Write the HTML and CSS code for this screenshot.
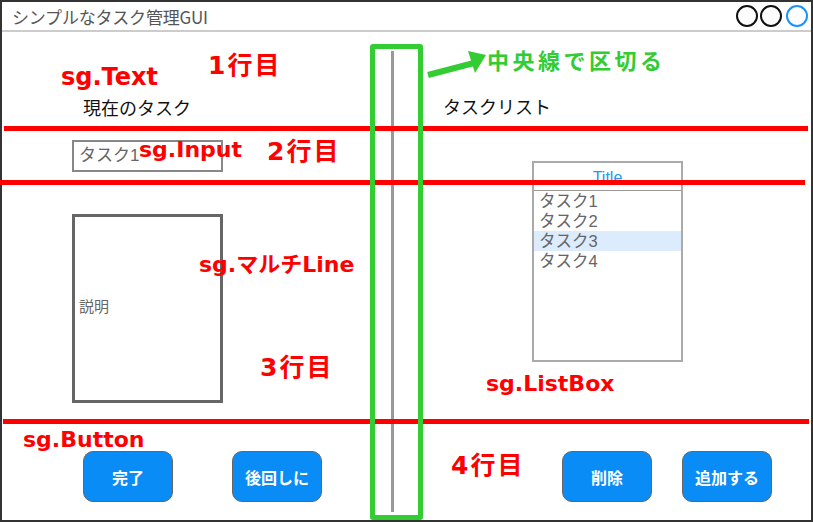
FILE: index.html
```html
<!DOCTYPE html>
<html lang="ja">
<head>
<meta charset="utf-8">
<title>シンプルなタスク管理GUI</title>
<link rel="stylesheet" href="styles.css">
</head>
<body>
<div class="window">
  <div class="titlebar">
    <span class="title">シンプルなタスク管理GUI</span>
    <div class="controls"><span class="dot"></span><span class="dot"></span><span class="dot blue"></span></div>
  </div>
  <div class="body">
    <div class="cell l1"><span class="label">現在のタスク</span></div>
    <div class="sep"></div>
    <div class="cell r1"><span class="label">タスクリスト</span></div>
    <div class="cell l2"><div class="input">タスク1</div></div>
    <div class="cell r23">
      <div class="listbox">
        <div class="lb-head">Title</div>
        <div class="lb-item">タスク1</div>
        <div class="lb-item">タスク2</div>
        <div class="lb-item selected">タスク3</div>
        <div class="lb-item">タスク4</div>
      </div>
    </div>
    <div class="cell l3"><div class="multiline">説明</div></div>
    <div class="cell l4 buttons"><button class="btn">完了</button><button class="btn">後回しに</button></div>
    <div class="cell r4 buttons"><button class="btn">削除</button><button class="btn">追加する</button></div>
  </div>
  <div class="annotations">
    <div class="rline rl1"></div>
    <div class="rline rl2"></div>
    <div class="rline rl3"></div>
    <div class="gbox"></div>
    <svg class="arrow" width="80" height="40" viewBox="0 0 80 40">
      <line x1="8" y1="30" x2="54" y2="18" stroke="#33cc33" stroke-width="6"/>
      <polygon points="48,6 55,28 66,10" fill="#33cc33"/>
    </svg>
    <div class="gtext">中央線で区切る</div>
    <div class="note n-text">sg.Text</div>
    <div class="note n-row1 big">1行目</div>
    <div class="note n-input">sg.Input</div>
    <div class="note n-row2 big">2行目</div>
    <div class="note n-multi">sg.マルチLine</div>
    <div class="note n-row3 big">3行目</div>
    <div class="note n-list">sg.ListBox</div>
    <div class="note n-button">sg.Button</div>
    <div class="note n-row4 big">4行目</div>
  </div>
</div>
</body>
</html>
```
FILE: styles.css
```css
html, body { margin: 0; padding: 0; background: #fff; }
body { width: 813px; height: 522px; overflow: hidden; font-family: "Liberation Sans", "Noto Sans CJK JP", sans-serif; }

.window {
  position: relative;
  width: 813px; height: 522px;
  box-sizing: border-box;
  border: 2px solid #333;
  display: flex; flex-direction: column;
}

.titlebar {
  height: 28px;
  border-bottom: 2px solid #ccc;
  display: flex; align-items: center;
  padding-left: 10px; padding-right: 3px;
}
.title { font-family: "Noto Sans CJK JP", sans-serif; font-size: 17px; color: #555; letter-spacing: -0.2px; }
.controls { margin-left: auto; display: flex; gap: 2px; }
.dot { width: 18px; height: 18px; border: 2px solid #111; border-radius: 50%; }
.dot.blue { border-color: #1e90ff; margin-left: 2px; }

.body {
  flex: 1;
  display: grid;
  grid-template-columns: 368px 53px 1fr;
  grid-template-rows: 94px 55px 239px 1fr;
}
.cell { min-width: 0; }
.label { font-family: "Noto Sans CJK JP", sans-serif; font-size: 18px; line-height: 1.2; color: #111; }
.l1 { grid-column: 1; grid-row: 1; padding: 65px 0 0 81px; }
.r1 { grid-column: 3; grid-row: 1; padding: 64px 0 0 20px; }
.sep { grid-column: 2; grid-row: 1 / 5; margin: 19px 0 8px 21px; width: 3px; background: #999; }

.l2 { grid-column: 1; grid-row: 2; padding: 14px 0 0 70px; }
.input {
  width: 151px; height: 32px; box-sizing: border-box;
  border: 2px solid #888;
  padding-left: 5px;
  font-size: 17px; line-height: 27px; color: #666;
}

.r23 { grid-column: 3; grid-row: 2 / 4; padding: 35px 0 0 109px; }
.listbox {
  width: 151px; height: 201px; box-sizing: border-box;
  border: 2px solid #aaa;
}
.lb-head {
  height: 28px; box-sizing: border-box;
  border-bottom: 1px solid #999;
  text-align: center; color: #2196f3; font-size: 16px; line-height: 30px;
}
.lb-item { height: 20px; padding-left: 5px; font-size: 16.5px; line-height: 20px; color: #666; }
.lb-item.selected { background: #dcecfc; }

.l3 { grid-column: 1; grid-row: 3; padding: 33px 0 0 70px; }
.multiline {
  width: 151px; height: 189px; box-sizing: border-box;
  border: 3px solid #666;
  display: flex; align-items: center;
  padding: 0 0 6px 4px;
  font-family: "Noto Sans CJK JP", sans-serif; font-size: 15px; color: #666;
}

.buttons { display: flex; align-items: flex-start; padding-top: 31px; }
.l4 { grid-column: 1; grid-row: 4; padding-left: 81px; gap: 59px; }
.r4 { grid-column: 3; grid-row: 4; padding-left: 139px; gap: 30px; }
.btn {
  width: 90px; height: 51px; box-sizing: border-box;
  border: 1px solid #666; border-radius: 10px;
  background: #0a8cf7; color: #fff;
  font-family: "Noto Sans CJK JP", sans-serif; font-weight: bold; font-size: 16px;
  padding: 0;
}

.annotations { position: absolute; left: -2px; top: -2px; width: 813px; height: 522px; pointer-events: none; }
.rline { position: absolute; height: 5px; background: #ff0000; }
.rl1 { left: 4px; top: 126px; width: 804px; }
.rl2 { left: 0; top: 180px; width: 805px; }
.rl3 { left: 3px; top: 419px; width: 806px; }
.gbox {
  position: absolute; left: 370px; top: 44px; width: 53px; height: 476px;
  box-sizing: border-box; border: 5px solid #33cc33; border-radius: 3px;
}
.arrow { position: absolute; left: 420px; top: 45px; }
.gtext {
  position: absolute; left: 487px; top: 48px;
  font-family: "Noto Sans CJK JP", sans-serif; font-weight: bold; font-size: 22px; line-height: 1;
  letter-spacing: 3.5px; color: #33cc33;
}
.note {
  position: absolute;
  font-family: "DejaVu Sans", "Noto Sans CJK JP", sans-serif; font-weight: bold;
  font-size: 22px; line-height: 1; color: #ff0000; white-space: nowrap;
}
.note.big { font-size: 25px; letter-spacing: 2px; }
.n-text { left: 61px; top: 65px; font-size: 24px; }
.n-row1 { left: 208px; top: 53px; }
.n-input { left: 139px; top: 139px; }
.n-row2 { left: 267px; top: 139px; }
.n-multi { left: 199px; top: 254px; }
.n-row3 { left: 260px; top: 355px; }
.n-list { left: 486px; top: 373px; }
.n-button { left: 23px; top: 429px; }
.n-row4 { left: 451px; top: 453px; }
```
